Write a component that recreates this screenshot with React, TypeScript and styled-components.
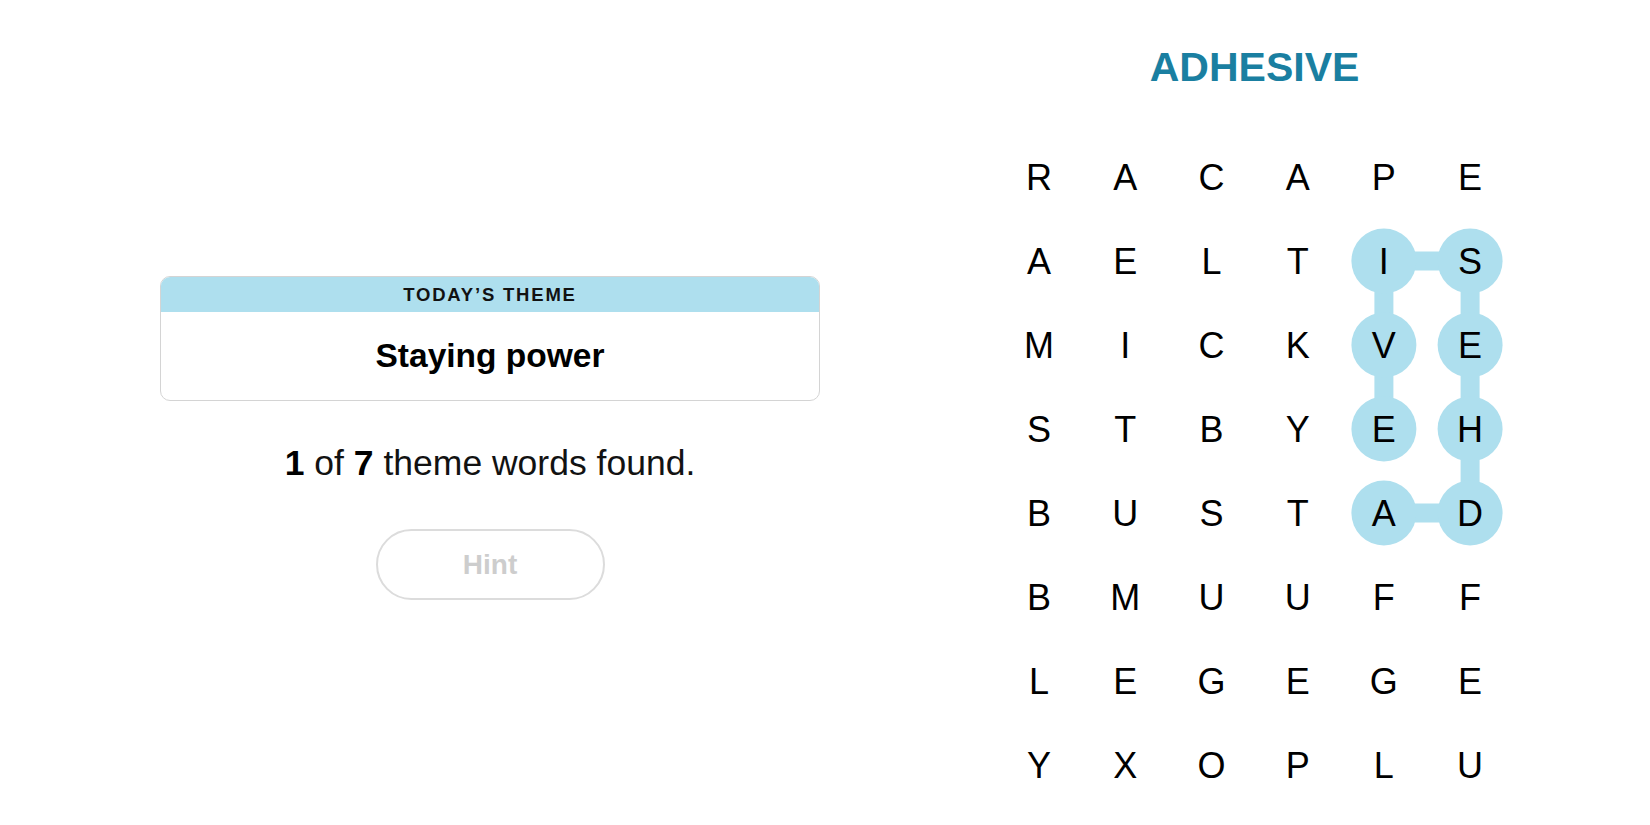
import { FC } from "react";
import styled, { createGlobalStyle } from "styled-components";

const CELL_W = 86.2;
const CELL_H = 84;

const GlobalStyle = createGlobalStyle`
	html, body {
		margin: 0;
		padding: 0;
		background: #ffffff;
	}

	body {
		font-family: "Liberation Sans", Arial, sans-serif;
		color: #000000;
	}
`;

const StyledPage = styled.main`
	display: flex;
	align-items: flex-start;
	width: 1650px;
	height: 825px;
	overflow: hidden;
`;

const StyledSidebar = styled.section`
	display: flex;
	flex-direction: column;
	align-items: center;
	width: 660px;
	margin-left: 160px;
	padding-top: 276px;
`;

const StyledThemeCard = styled.div`
	width: 100%;
	box-sizing: border-box;
	border: 1px solid #d4d4d4;
	border-radius: 10px;
	overflow: hidden;
`;

const StyledThemeHeader = styled.div`
	display: flex;
	align-items: center;
	justify-content: center;
	height: 35px;
	background: #aedfee;
	font-size: 18.5px;
	font-weight: 700;
	letter-spacing: 1.8px;
	color: #121212;
`;

const StyledThemeBody = styled.div`
	display: flex;
	align-items: center;
	justify-content: center;
	height: 88px;
	font-size: 33.5px;
	font-weight: 700;
`;

const StyledProgress = styled.p`
	margin: 42px 0 0;
	font-size: 35.5px;
	line-height: 40px;
	color: #121212;

	b {
		font-weight: 700;
		color: #000000;
	}
`;

const StyledHintButton = styled.button`
	margin-top: 46px;
	width: 229px;
	height: 71px;
	box-sizing: border-box;
	border: 2px solid #dcdcdc;
	border-radius: 36px;
	background: #ffffff;
	color: #cdcdcd;
	font-family: "Liberation Sans", Arial, sans-serif;
	font-size: 28px;
	font-weight: 700;
	cursor: default;
`;

const StyledBoardColumn = styled.section`
	display: flex;
	flex-direction: column;
	align-items: center;
	margin-left: 176px;
	padding-top: 43px;
`;

const StyledFoundWord = styled.h1`
	margin: 0 0 45px;
	font-size: 41px;
	line-height: 48px;
	font-weight: 700;
	color: #1a7fa1;
`;

const StyledBoard = styled.div`
	position: relative;
	display: grid;
	grid-template-columns: repeat(6, ${CELL_W}px);
	grid-auto-rows: ${CELL_H}px;
`;

const StyledPathLayer = styled.svg`
	position: absolute;
	left: 0;
	top: 0;
	z-index: 0;
	pointer-events: none;
`;

const StyledLetter = styled.div`
	position: relative;
	z-index: 1;
	display: flex;
	align-items: center;
	justify-content: center;
	font-size: 36px;
	line-height: 36px;
	color: #000000;
`;

const letters = [
	"RACAPE",
	"AELTIS",
	"MICKVE",
	"STBYEH",
	"BUSTAD",
	"BMUUFF",
	"LEGEGE",
	"YXOPLU",
];

// A D H E S I V E, as [col, row]
const foundPath: [number, number][] = [
	[4, 4],
	[5, 4],
	[5, 3],
	[5, 2],
	[5, 1],
	[4, 1],
	[4, 2],
	[4, 3],
];

const center = ([col, row]: [number, number]) => ({
	x: col * CELL_W + CELL_W / 2,
	y: row * CELL_H + CELL_H / 2 - 1,
});

const WordPath: FC = () => {
	const points = foundPath.map(center);
	const width = CELL_W * 6;
	const height = CELL_H * letters.length;

	return (
		<StyledPathLayer width={width} height={height}>
			{points.slice(1).map((p, i) => (
				<line
					key={`l${i}`}
					x1={points[i].x}
					y1={points[i].y}
					x2={p.x}
					y2={p.y}
					stroke="#aedfee"
					strokeWidth={19}
				/>
			))}
			{points.map((p, i) => (
				<circle key={`c${i}`} cx={p.x} cy={p.y} r={32.5} fill="#aedfee" />
			))}
		</StyledPathLayer>
	);
};

const App: FC = () => {
	return (
		<>
			<GlobalStyle />
			<StyledPage>
				<StyledSidebar>
					<StyledThemeCard>
						<StyledThemeHeader>TODAY’S THEME</StyledThemeHeader>
						<StyledThemeBody>Staying power</StyledThemeBody>
					</StyledThemeCard>
					<StyledProgress>
						<b>1</b> of <b>7</b> theme words found.
					</StyledProgress>
					<StyledHintButton type="button">Hint</StyledHintButton>
				</StyledSidebar>
				<StyledBoardColumn>
					<StyledFoundWord>ADHESIVE</StyledFoundWord>
					<StyledBoard>
						<WordPath />
						{letters.map((row, r) =>
							row.split("").map((ch, c) => (
								<StyledLetter key={`${r}-${c}`}>{ch}</StyledLetter>
							))
						)}
					</StyledBoard>
				</StyledBoardColumn>
			</StyledPage>
		</>
	);
};

export default App;
